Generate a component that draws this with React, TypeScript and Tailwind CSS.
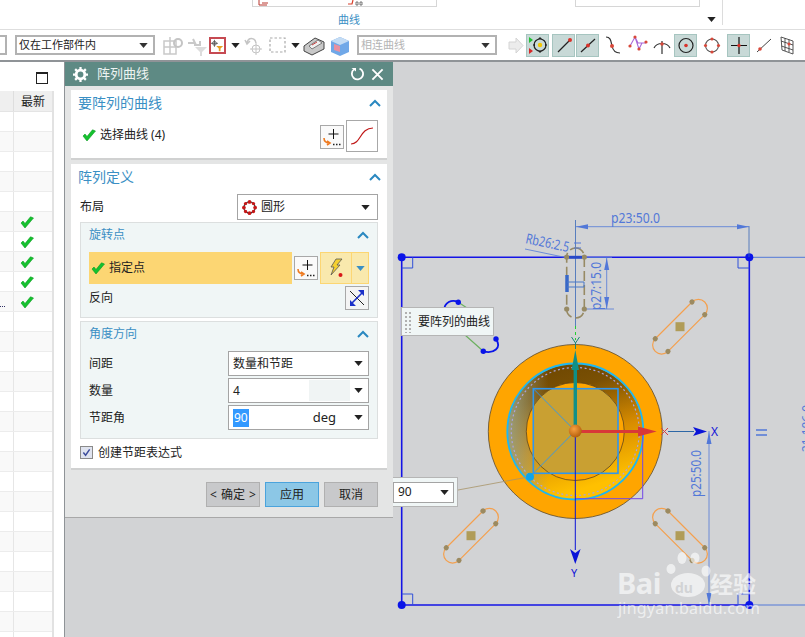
import type { ReactNode } from "react";

const fontCls = "font-['Noto_Sans','Noto_Sans_CJK_SC',sans-serif]";

function Check({ className = "" }: { className?: string }) {
  return (
    <svg viewBox="0 0 14 13" className={`h-[13px] w-[14px] shrink-0 ${className}`} aria-hidden>
      <path d="M1 7 L5 12 L13.5 2 L10.5 0.8 L5 7.5 L3 5 Z" fill="#14c22e" stroke="#0c9a22" strokeWidth="0.6" />
    </svg>
  );
}

function Chevron() {
  return (
    <svg viewBox="0 0 12 8" className="h-[8px] w-[12px] shrink-0" aria-hidden>
      <path d="M1 7 L6 2 L11 7" fill="none" stroke="#2a88c0" strokeWidth="2" />
    </svg>
  );
}

function Caret({ color = "#222" }: { color?: string }) {
  return (
    <svg viewBox="0 0 10 6" className="h-[5px] w-[9px] shrink-0" aria-hidden>
      <path d="M0 0 H10 L5 6 Z" fill={color} />
    </svg>
  );
}

function AddButton() {
  return (
    <div className="h-[24px] w-[24px] shrink-0 border border-[#a8a8a8] bg-[#fafafa]">
      <svg viewBox="0 0 22 22" className="h-full w-full" aria-hidden>
        <path d="M12.5 3 V13 M7.5 8 H17.5" stroke="#111" strokeWidth="1" />
        <path d="M3 12 C3 16 5 17 9 17 M6 15 L9 17 L6 19" fill="none" stroke="#ee7a20" strokeWidth="1.6" />
        <path d="M12 18.5 H13.5 M15 18.5 H16.5 M18 18.5 H19.5" stroke="#222" strokeWidth="1.6" />
      </svg>
    </div>
  );
}

function Dropdown({ children, className = "" }: { children: ReactNode; className?: string }) {
  return (
    <div className={`flex h-[25px] items-center justify-between border border-[#a4a4a4] bg-white pl-[4px] pr-[5px] text-[12px] text-[#222] ${className}`}>
      {children}
      <Caret />
    </div>
  );
}

function PanelHead({ title, className = "" }: { title: string; className?: string }) {
  return (
    <div className={`flex items-center justify-between ${className}`}>
      <span className="text-[#3a8fc4]">{title}</span>
      <Chevron />
    </div>
  );
}

function SelectBox({ children, className = "" }: { children: ReactNode; className?: string }) {
  return (
    <div className={`flex h-[20px] items-center justify-between border-2 border-[#b2b2b2] bg-white pl-[2px] pr-[5px] text-[11px] ${className}`}>
      {children}
      <Caret color="#333" />
    </div>
  );
}

function Tool({ children, className = "", on = false }: { children: ReactNode; className?: string; on?: boolean }) {
  return (
    <div className={`flex h-[23px] shrink-0 items-center justify-center ${on ? "border border-[#a6c5c0] bg-[#c8d9d7]" : ""} ${className}`}>
      <svg viewBox="0 0 24 23" className="h-[23px] w-[24px] shrink-0 overflow-visible" aria-hidden>
        {children}
      </svg>
    </div>
  );
}

function Ribbon() {
  return (
    <div className="flex h-[30px] border-b border-[#dedede] bg-white">
      <div className="ml-[252px] flex h-[29px] w-[448px] flex-col">
        <div className="flex">
          <div className="flex h-[7px] w-[185px] items-start justify-between border-x border-b border-[#d6d6d6] px-[5px]">
            <svg viewBox="0 0 12 6" className="h-[6px] w-[12px]" aria-hidden>
              <path d="M1 0 V5 H9 M4 3 H10" fill="none" stroke="#b8362e" strokeWidth="1" />
            </svg>
            <svg viewBox="0 0 16 6" className="mr-[67px] h-[6px] w-[16px]" aria-hidden>
              <path d="M0 4 H4 L5 0" fill="none" stroke="#d8402c" strokeWidth="1.2" />
              <path d="M8 2 H10 V5 H8 Z M12 2 H14 V5 H12 Z" fill="none" stroke="#555" strokeWidth="0.8" />
            </svg>
          </div>
          <div className="ml-[138px] h-[7px] w-[125px] border-x border-b border-[#d6d6d6]" />
        </div>
        <div className="mt-[5px] pl-[86px] text-[11px] leading-[16px] text-[#3a8fc4]">曲线</div>
      </div>
      <div className="ml-[7px] mt-[17px]">
        <Caret />
      </div>
      <div className="ml-[6px] h-[25px] border-l border-[#dcdcdc]" />
    </div>
  );
}

function Toolbar() {
  return (
    <div className="flex h-[32px] items-center border-b-2 border-[#8f9397] bg-white">
      <div className="h-[20px] w-[7px] shrink-0 border-y-2 border-r-2 border-[#b2b2b2]" />
      <SelectBox className="ml-[8px] w-[140px] text-[#222]">仅在工作部件内</SelectBox>
      <Tool className="ml-[8px] w-[20px]">
        <path d="M3 7 H15 V20 H3 Z M9 3 V20 M3 13 H15" fill="none" stroke="#c9c9c9" strokeWidth="1.5" />
        <circle cx="17" cy="9" r="4" fill="none" stroke="#c4c4c4" strokeWidth="2" />
      </Tool>
      <Tool className="ml-[4px] w-[20px]">
        <path d="M3 9 H10 L8 5 M15 7 V11 H9" fill="none" stroke="#c9c9c9" strokeWidth="2" />
        <path d="M10 13 H22 L17 18 V22 H15 V18 Z" fill="#dcdcdc" />
      </Tool>
      <div className="ml-[2px] flex h-[17px] w-[17px] shrink-0 items-center justify-center border-2 border-[#c64a52] bg-white">
        <svg viewBox="0 0 15 13" className="h-[13px] w-[15px]" aria-hidden>
          <circle cx="4" cy="4" r="2.2" fill="none" stroke="#555" />
          <path d="M4 0 V8 M0 4 H8" stroke="#555" />
          <path d="M6 7 H14 L11 10 V13 H9 V10 Z" fill="#e8a020" />
        </svg>
      </div>
      <div className="ml-[5px]">
        <Caret />
      </div>
      <Tool className="ml-[4px] w-[21px]">
        <path d="M4 9 C5 3 12 3 13 9 M2 6 L4 10 L7 7" fill="none" stroke="#c4c4c4" strokeWidth="1.5" />
        <circle cx="13" cy="15" r="4" fill="none" stroke="#c4c4c4" />
        <path d="M13 9 V21 M7 15 H19" stroke="#c4c4c4" />
      </Tool>
      <Tool className="ml-[3px] w-[19px]">
        <path d="M4 4 H19 V18 H4 Z" fill="none" stroke="#a9a9a9" strokeWidth="1.2" strokeDasharray="2.5 2" />
      </Tool>
      <div className="ml-[4px]">
        <Caret />
      </div>
      <Tool className="ml-[3px] w-[22px]">
        <path d="M2 12 L13 4 L22 8 L22 15 L10 21 L2 17 Z" fill="#c8c8c8" stroke="#444" />
        <path d="M7 12 L16 6 L20 9 L10 15 Z" fill="#f0f0f0" stroke="#555" strokeWidth="0.7" />
        <path d="M10 11 L15 8" stroke="#c84040" />
      </Tool>
      <Tool className="ml-[4px] w-[22px]">
        <path d="M3 7 L12 3 L21 7 V18 L12 22 L3 18 Z" fill="#70a8e8" />
        <path d="M3 7 L12 3 L21 7 L12 11 Z" fill="#c4dcf4" />
        <path d="M6 10 L12 12 V18 L6 16 Z" fill="#e890a0" />
      </Tool>
      <SelectBox className="ml-[6px] w-[140px] text-[#b4b4b4]">相连曲线</SelectBox>
      <Tool className="ml-[11px] w-[18px]">
        <path d="M4 8 H11 V4 L18 11.5 L11 19 V15 H4 Z" fill="#ececec" stroke="#d4d4d4" />
      </Tool>
      <Tool on className="ml-[0px] w-[23px]">
        <path d="M3 3 L7 6 L3 9 Z" fill="#20c030" />
        <path d="M3 14 L7 17 L3 20 Z" fill="#d82828" />
        <circle cx="14" cy="11" r="6" fill="none" stroke="#222" strokeWidth="1.2" />
        <circle cx="14" cy="11" r="2.2" fill="#f4c800" />
        <path d="M14 3 l2 2 h-4 Z M14 19 l2 -2 h-4 Z M7 11 l2 -2 v4 Z M21 11 l-2 -2 v4 Z" fill="#222" />
      </Tool>
      <Tool on className="ml-[3px] w-[23px]">
        <path d="M6 18 L18 6" stroke="#222" strokeWidth="1.2" />
        <circle cx="18" cy="6" r="2" fill="#d8322a" />
      </Tool>
      <Tool on className="ml-[1px] w-[23px]">
        <path d="M5 18 L19 5" stroke="#222" strokeWidth="1.2" />
        <circle cx="12" cy="11.5" r="2" fill="#d8322a" />
      </Tool>
      <Tool className="ml-[6px] w-[18px]">
        <path d="M4 3 C9 3 9 8 10 12 C11 17 13 19 18 19" fill="none" stroke="#333" strokeWidth="1.2" />
        <circle cx="10" cy="12" r="2" fill="#d8483a" />
      </Tool>
      <Tool className="ml-[4px] w-[22px]">
        <path d="M4 12 L9 3 L13 15 L16 9 L20 9 M9 3 L12 9 L16 9" fill="none" stroke="#a868d8" strokeWidth="1.1" />
        <circle cx="4" cy="12" r="1.6" fill="#d8483a" />
        <circle cx="9" cy="3" r="1.6" fill="#d8483a" />
        <circle cx="13" cy="15" r="1.6" fill="#d8483a" />
        <circle cx="20" cy="8" r="1.6" fill="#d8483a" />
      </Tool>
      <Tool className="ml-[2px] w-[22px]">
        <path d="M4 14 C7 8 17 8 20 14 M12 7 V20" fill="none" stroke="#333" strokeWidth="1.2" />
        <circle cx="12" cy="10" r="1.7" fill="#d8483a" />
      </Tool>
      <Tool on className="ml-[1px] w-[23px]">
        <circle cx="12" cy="11.5" r="7" fill="none" stroke="#222" strokeWidth="1.2" />
        <circle cx="12" cy="11.5" r="1.8" fill="#d8322a" />
      </Tool>
      <Tool className="ml-[3px] w-[24px]">
        <circle cx="12" cy="11.5" r="6.5" fill="none" stroke="#555" strokeWidth="1.1" />
        <circle cx="12" cy="5" r="1.6" fill="#d8483a" />
        <circle cx="12" cy="18" r="1.6" fill="#d8483a" />
        <circle cx="5.5" cy="11.5" r="1.6" fill="#d8483a" />
        <circle cx="18.5" cy="11.5" r="1.6" fill="#d8483a" />
      </Tool>
      <Tool on className="ml-[3px] w-[23px]">
        <path d="M12 3 V20 M4 11.5 H20" stroke="#111" strokeWidth="1.2" />
        <circle cx="12" cy="11.5" r="1.7" fill="#d8322a" />
      </Tool>
      <Tool className="ml-[5px] w-[17px]">
        <path d="M5 18 L19 5" stroke="#444" strokeWidth="1" />
        <circle cx="8" cy="15" r="1.8" fill="#d8483a" />
      </Tool>
      <Tool className="ml-[7px] w-[16px]">
        <path d="M6 3 L18 7 V20 L7 16 Z M6 7 L18 11 M6.5 12 L18 16 M10 4 V17 M14 5.5 V18" fill="none" stroke="#444" strokeWidth="0.9" />
        <circle cx="14" cy="10" r="1.5" fill="#d8483a" />
      </Tool>
    </div>
  );
}

function LeftPanel() {
  const rows = Array.from({ length: 27 }, (_, i) => i);
  return (
    <div className="h-full w-[65px] shrink-0 overflow-hidden border-r border-[#8f9397] bg-white">
      <div className="flex h-[29px] items-start pl-[36px] pt-[10px]">
        <div className="h-[12px] w-[12px] border border-t-2 border-[#222]" />
      </div>
      <div className="w-[54px] border-r-2 border-[#e2e2e2]">
        <div className="flex h-[21px] border-b border-[#e4e4e4] bg-[#efefef]">
          <div className="w-[14px] border-r border-[#dedede]" />
          <div className="flex-1 text-center text-[12px] leading-[21px] text-[#222]">最新</div>
        </div>
        {rows.map((i) => (
          <div key={i} className={`flex h-[20px] border-b border-[#ececec] ${i % 2 ? "bg-[#f9f9f9]" : "bg-white"}`}>
            <div className="flex w-[14px] items-end border-r border-[#e6e6e6]">
              {i === 9 && <span className="mb-[4px] h-[1px] w-[5px] border-t border-dotted border-[#336]" />}
            </div>
            <div className="flex flex-1 items-center pl-[6px] pt-[2px]">{i >= 5 && i <= 9 && <Check />}</div>
          </div>
        ))}
      </div>
    </div>
  );
}

function Dialog() {
  return (
    <div className="absolute left-0 top-0 flex h-[456px] w-[328px] flex-col border-b border-[#a8a8a8] bg-[#e4e5e5] text-[12px] text-[#222]">
      <div className="flex h-[24px] shrink-0 items-center bg-[#5e8a84] pl-[8px] pr-[9px] text-[13px] text-[#eef4f2]">
        <svg viewBox="0 0 16 16" className="h-[15px] w-[15px]" aria-hidden>
          <circle cx="8" cy="8" r="4.6" fill="none" stroke="#fff" strokeWidth="3" />
          <path d="M8 0 V3 M8 13 V16 M0 8 H3 M13 8 H16 M2.3 2.3 L4.4 4.4 M11.6 11.6 L13.7 13.7 M2.3 13.7 L4.4 11.6 M11.6 4.4 L13.7 2.3" stroke="#fff" strokeWidth="2.4" />
        </svg>
        <span className="ml-[9px] flex-1">阵列曲线</span>
        <svg viewBox="0 0 14 14" className="h-[14px] w-[14px]" aria-hidden>
          <path d="M4 2.4 A5.6 5.6 0 1 0 9.5 1.6" fill="none" stroke="#fff" strokeWidth="1.8" />
          <path d="M1.5 1 H6 V4.5 Z" fill="#fff" />
        </svg>
        <svg viewBox="0 0 14 14" className="ml-[7px] h-[13px] w-[13px]" aria-hidden>
          <path d="M1.5 1.5 L12.5 12.5 M12.5 1.5 L1.5 12.5" stroke="#fff" strokeWidth="2" />
        </svg>
      </div>

      <div className="mx-[6px] mt-[4px] h-[70px] border-b-2 border-[#d0d1d1] bg-white">
        <PanelHead title="要阵列的曲线" className="h-[25px] pl-[7px] pr-[6px] text-[14px]" />
        <div className="mt-[5px] flex items-start pl-[11px] pr-[9px]">
          <div className="mt-[6px] flex flex-1 items-center gap-[4px]">
            <Check />
            <span>选择曲线 (4)</span>
          </div>
          <div className="mt-[5px]">
            <AddButton />
          </div>
          <div className="ml-[2px] h-[32px] w-[32px] border border-[#a8a8a8] bg-white">
            <svg viewBox="0 0 30 30" className="h-full w-full" aria-hidden>
              <path d="M4 23 C14 23 13 7 26 7" fill="none" stroke="#c01818" strokeWidth="1.2" />
            </svg>
          </div>
        </div>
      </div>

      <div className="mx-[6px] mt-[4px] h-[306px] border-b-2 border-[#d0d1d1] bg-white">
        <PanelHead title="阵列定义" className="h-[25px] pl-[7px] pr-[6px] text-[14px]" />
        <div className="mt-[5px] flex h-[26px] items-center justify-between pl-[9px] pr-[9px]">
          <span>布局</span>
          <div className="flex h-[26px] w-[141px] items-center justify-between border border-[#a4a4a4] bg-white pl-[4px] pr-[7px]">
            <span className="flex items-center gap-[4px] text-[12px]">
              <svg viewBox="0 0 16 16" className="h-[15px] w-[15px]" aria-hidden>
                <circle cx="8" cy="8" r="6" fill="none" stroke="#333" strokeWidth="1.2" />
                <g fill="#c81818">
                  <circle cx="8" cy="2" r="2" />
                  <circle cx="8" cy="14" r="2" />
                  <circle cx="2" cy="8" r="2" />
                  <circle cx="14" cy="8" r="2" />
                  <circle cx="3.8" cy="3.8" r="1.8" />
                  <circle cx="12.2" cy="3.8" r="1.8" />
                  <circle cx="3.8" cy="12.2" r="1.8" />
                  <circle cx="12.2" cy="12.2" r="1.8" />
                </g>
              </svg>
              圆形
            </span>
            <Caret />
          </div>
        </div>

        <div className="mx-[9px] mt-[2px] h-[96px] border border-[#dcdfdf] bg-[#f0f6f6] px-[8px]">
          <PanelHead title="旋转点" className="h-[23px] pr-[0px]" />
          <div className="mt-[6px] flex h-[32px] items-center">
            <div className="flex h-[32px] w-[203px] items-center gap-[4px] bg-[#fcd673] pl-[2px]">
              <Check />
              <span>指定点</span>
            </div>
            <div className="ml-[2px]">
              <AddButton />
            </div>
            <div className="ml-[2px] flex h-[32px] w-[49px] border border-[#fcd673] bg-[#f9e9ad]">
              <div className="flex w-[31px] items-center justify-center border-r border-[#fcd673]">
                <svg viewBox="0 0 18 22" className="h-[22px] w-[18px]" aria-hidden>
                  <path d="M9 2 L15 2 L10 8 L13 8 L4 18 L7 10 L4 10 Z" fill="#f4d030" stroke="#555" strokeWidth="0.8" />
                  <circle cx="13.5" cy="18" r="2" fill="#d81818" />
                </svg>
              </div>
              <div className="flex flex-1 items-center justify-center">
                <Caret color="#3a8fc4" />
              </div>
            </div>
          </div>
          <div className="mt-[2px] flex h-[24px] items-center justify-between">
            <span>反向</span>
            <div className="h-[24px] w-[24px] border border-[#a8a8a8] bg-[#f4f4f4]">
              <svg viewBox="0 0 22 22" className="h-full w-full" aria-hidden>
                <path d="M4 4 L18 18" stroke="#222" strokeWidth="1" />
                <path d="M5 17 L17 5" stroke="#1c30c8" strokeWidth="1.6" />
                <path d="M18 3 V9 L12 3 Z M4 19 V13 L10 19 Z" fill="#1c30c8" />
              </svg>
            </div>
          </div>
        </div>

        <div className="mx-[9px] mt-[3px] h-[118px] border border-[#dcdfdf] bg-[#f0f6f6] px-[8px]">
          <PanelHead title="角度方向" className="h-[23px]" />
          <div className="mt-[6px] flex flex-col gap-[2px]">
            <div className="flex items-center justify-between">
              <span>间距</span>
              <Dropdown className="w-[141px]">数量和节距</Dropdown>
            </div>
            <div className="flex items-center justify-between">
              <span>数量</span>
              <Dropdown className="w-[141px]">
                <span className="flex h-[21px] flex-1 items-center">
                  <span className="w-[76px]">4</span>
                  <span className="h-[21px] w-[41px] bg-[#f0f4f4]" />
                </span>
              </Dropdown>
            </div>
            <div className="flex items-center justify-between">
              <span>节距角</span>
              <Dropdown className="w-[141px]">
                <span className="flex flex-1 items-center">
                  <span className="bg-[#3399ff] px-[1px] text-white">90</span>
                  <span className="ml-[64px] text-[13px]">deg</span>
                </span>
              </Dropdown>
            </div>
          </div>
        </div>

        <div className="ml-[9px] mt-[7px] flex h-[13px] items-center gap-[5px]">
          <div className="flex h-[13px] w-[13px] items-center justify-center border border-[#8a8a8a] bg-[#dfe3ef]">
            <svg viewBox="0 0 10 10" className="h-[9px] w-[9px]" aria-hidden>
              <path d="M1.5 5 L4 8 L8.5 1.5" fill="none" stroke="#3c4c9c" strokeWidth="1.6" />
            </svg>
          </div>
          <span>创建节距表达式</span>
        </div>
      </div>

      <div className="mr-[15px] mt-[12px] flex justify-end gap-[5px] text-[12px]">
        <div className="flex h-[25px] w-[54px] items-center justify-center gap-[4px] border border-[#b0b0b0] bg-[#c8c9cb]">
          <span>&lt;</span>确定<span>&gt;</span>
        </div>
        <div className="flex h-[25px] w-[54px] items-center justify-center border border-[#4aa3dc] bg-[#8cc7e6]">应用</div>
        <div className="flex h-[25px] w-[54px] items-center justify-center border border-[#b0b0b0] bg-[#c8c9cb]">取消</div>
      </div>
    </div>
  );
}

function Slot({ cx, cy, flip = false }: { cx: number; cy: number; flip?: boolean }) {
  return (
    <g transform={`translate(${cx} ${cy}) rotate(${flip ? 45 : -45})`}>
      <rect x="-35" y="-9" width="70" height="18" rx="9" fill="none" stroke="#f4a04e" strokeWidth="1.2" />
      <circle cx="-26" cy="-9" r="2.6" fill="#9c8a60" />
      <circle cx="-26" cy="9" r="2.6" fill="#9c8a60" />
      <circle cx="26" cy="-9" r="2.6" fill="#9c8a60" />
      <circle cx="26" cy="9" r="2.6" fill="#9c8a60" />
      <rect x="-4.5" y="-4.5" width="9" height="9" transform={`rotate(${flip ? -45 : 45})`} fill="#b09c58" />
    </g>
  );
}

function CadCanvas() {
  const dim = "#5278d8";
  return (
    <svg viewBox="65 62 740 575" className="absolute inset-0 h-full w-full" aria-hidden>
      <defs>
        <linearGradient id="ring" x1="0" y1="0" x2="0.3" y2="1">
          <stop offset="0" stopColor="#6a4400" />
          <stop offset="0.3" stopColor="#7a5004" />
          <stop offset="0.65" stopColor="#d88c00" />
          <stop offset="1" stopColor="#ffc000" />
        </linearGradient>
        <linearGradient id="ringLeft" x1="0" y1="0" x2="1" y2="0">
          <stop offset="0" stopColor="#9aa080" stopOpacity="0.95" />
          <stop offset="0.3" stopColor="#9aa080" stopOpacity="0" />
        </linearGradient>
        <radialGradient id="ball" cx="0.4" cy="0.35" r="0.7">
          <stop offset="0" stopColor="#f8a040" />
          <stop offset="1" stopColor="#b05a08" />
        </radialGradient>
        <clipPath id="hole">
          <circle cx="575.3" cy="431.5" r="49" />
        </clipPath>
      </defs>

      {/* outline */}
      <path d="M401.7 257.3 H749.3 V605 H401.7 Z" fill="none" stroke="#1414e6" strokeWidth="1.6" />
      <path d="M749 257.3 H805 M749 605 H805" stroke={dim} strokeWidth="1" />
      <path d="M401.7 268 H412.7 V257.3 M749.3 268 H738 V257.3 M401.7 594 H412.7 V605 M749.3 594 H738 V605" fill="none" stroke="#3050d8" strokeWidth="1" />
      <circle cx="401.7" cy="257.3" r="4" fill="#0a14e8" />
      <circle cx="749.3" cy="257.3" r="4" fill="#0a14e8" />
      <circle cx="401.7" cy="605" r="4" fill="#0a14e8" />
      <circle cx="749.3" cy="605" r="4" fill="#0a14e8" />

      {/* dimensions */}
      <path d="M575.5 220 V326 M749 226 V257" stroke="#3868b8" strokeWidth="0.8" />
      <path d="M576 226.7 H749" stroke={dim} strokeWidth="0.8" />
      <path d="M576 226.7 l12 -2.5 v5 Z M749 226.7 l-12 -2.5 v5 Z" fill={dim} />
      <text x="611" y="223" fontSize="14" fill={dim} textLength="49" lengthAdjust="spacingAndGlyphs">p23:50.0</text>
      <text transform="translate(525 243) rotate(12)" fontSize="14" fill={dim} textLength="44" lengthAdjust="spacingAndGlyphs">Rb26:2.5</text>
      <path d="M525 249 L568 258" stroke={dim} strokeWidth="0.8" />
      <path d="M606.7 257.5 V309 M586 309 H614 M586 257.5 H612" stroke={dim} strokeWidth="0.8" />
      <path d="M606.7 258 l-2.5 12 h5 Z M606.7 309 l-2.5 -12 h5 Z" fill={dim} />
      <text transform="translate(601 310) rotate(-90)" fontSize="14" fill={dim} textLength="48" lengthAdjust="spacingAndGlyphs">p27:15.0</text>
      <path d="M709 431 V605" stroke={dim} strokeWidth="0.8" />
      <path d="M709 432 l-2.5 12 h5 Z M709 605 l-2.5 -12 h5 Z" fill={dim} />
      <text transform="translate(701 497) rotate(-90)" fontSize="14" fill={dim} textLength="47" lengthAdjust="spacingAndGlyphs">p25:50.0</text>
      <path d="M756 430 H767 M756 435 H767" stroke={dim} strokeWidth="1.4" />
      <text transform="translate(811 452) rotate(-90)" fontSize="12" fill={dim} textLength="47" lengthAdjust="spacingAndGlyphs">31.186.0</text>

      {/* slots */}
      <Slot cx={680} cy={326.7} flip={false} />
      <Slot cx={471} cy={535.7} flip={false} />
      <Slot cx={680} cy={535.7} flip />
      <rect x="566.7" y="248" width="17.6" height="70" rx="8.8" fill="none" stroke="#978a64" strokeWidth="1.6" strokeDasharray="10 4" />
      <circle cx="566.7" cy="257" r="2.6" fill="#978a64" />
      <circle cx="584.3" cy="257" r="2.6" fill="#978a64" />
      <circle cx="566.7" cy="309" r="2.6" fill="#978a64" />
      <circle cx="584.3" cy="309" r="2.6" fill="#978a64" />
      <path d="M569 257.3 H582" stroke="#2848c8" strokeWidth="3" />
      <path d="M567 275 V292" stroke="#3868c8" strokeWidth="3.5" />
      <path d="M567 282 H584 V287 H567" fill="none" stroke="#4878c8" strokeWidth="1" />
      <path d="M574 243 H581 M574 248 H581" stroke={dim} strokeWidth="1.2" />

      {/* selected curve */}
      <path d="M444 311 C444 302 452 299 458 302" fill="none" stroke="#0a14e8" strokeWidth="1.8" />
      <path d="M496 339 C502 348 494 354 483.3 351.3" fill="none" stroke="#0a14e8" strokeWidth="1.8" />
      <path d="M458 302 L470 310 M465 335 L483.3 351.3" stroke="#6cb060" strokeWidth="1.2" />
      <circle cx="458.3" cy="302.3" r="2.7" fill="#0a14e8" />
      <circle cx="496" cy="339" r="2.7" fill="#0a14e8" />
      <circle cx="483.3" cy="351.3" r="2.7" fill="#0a14e8" />

      {/* body */}
      <circle cx="575.3" cy="431.5" r="87" fill="#ffa500" stroke="#5a4a30" strokeWidth="0.8" />
      <circle cx="575.3" cy="431.5" r="67.5" fill="url(#ring)" />
      <circle cx="575.3" cy="431.5" r="67.5" fill="url(#ringLeft)" />
      <circle cx="575.3" cy="431.5" r="49" fill="#ffa500" />
      <rect x="533.3" y="388.7" width="84.7" height="84.6" fill="#c9a032" clipPath="url(#hole)" />
      <circle cx="575.3" cy="431.5" r="49" fill="none" stroke="#4a3a20" strokeWidth="0.7" />
      <circle cx="575.3" cy="431.5" r="64" fill="none" stroke="#a8a4e0" strokeWidth="1.2" strokeDasharray="2 2.5" />
      <circle cx="575.3" cy="431.5" r="68" fill="none" stroke="#1cb8f4" strokeWidth="1.8" />
      <path d="M575.5 498.7 H642.7 V431" fill="none" stroke="#7048e8" strokeWidth="1" />
      <rect x="533.3" y="388.7" width="84.7" height="84.6" fill="none" stroke="#2f96ee" strokeWidth="1.6" />
      <path d="M533.3 388.7 L575.3 431 L530 476.7" fill="none" stroke="#2f96ee" strokeWidth="0.9" />
      <path d="M458 490 L530 476.7" stroke="#a89468" strokeWidth="0.8" />
      <circle cx="530" cy="476.7" r="4" fill="#0ea4ea" />

      {/* triad */}
      <path d="M575.5 326 V340" stroke="#20d030" strokeWidth="1" strokeDasharray="3 3" />
      <path d="M571.5 337 L575.5 343 L579.5 337 M575.5 343 V349" fill="none" stroke="#208878" strokeWidth="1" />
      <path d="M575.3 431 V368" stroke="#109088" strokeWidth="3.4" />
      <path d="M575.3 350 L579 370 H571.6 Z" fill="#109088" />
      <path d="M575.3 431 V550" stroke="#0a14d8" strokeWidth="1" />
      <path d="M575.3 564 L570 549 L575.3 553 L580.6 549 Z" fill="#0a14d8" />
      <text x="571" y="577" fontSize="11" fill="#1414d8">Y</text>
      <path d="M580 431.5 H645" stroke="#d83838" strokeWidth="3.2" />
      <path d="M656.7 431.5 L638 426.5 V436.5 Z" fill="#d83838" />
      <path d="M661 428 L668 435 M668 428 L661 435" stroke="#d84040" strokeWidth="1" />
      <path d="M668 431.5 H694" stroke="#1a5aa0" strokeWidth="0.9" />
      <path d="M707 431.5 L693 427 L696 431.5 L693 436 Z" fill="#0a14d8" />
      <text x="711" y="436" fontSize="12" fill="#1414d8">X</text>
      <circle cx="575.3" cy="431" r="6.5" fill="url(#ball)" />

      {/* watermark */}
      <g fill="#fff" opacity="0.62">
        <text x="617" y="594" fontSize="29" fontWeight="700" letterSpacing="-0.5">Bai</text>
        <ellipse cx="688" cy="585" rx="17" ry="12" />
        <ellipse cx="671" cy="569" rx="4.5" ry="5" />
        <ellipse cx="682" cy="558" rx="4.5" ry="6" />
        <ellipse cx="695" cy="558" rx="4.5" ry="5.5" />
        <ellipse cx="706" cy="571" rx="4.5" ry="5.5" />
        <text x="710" y="593" fontSize="23" fontWeight="700">经验</text>
        <text x="618" y="614" fontSize="16" textLength="142">jingyan.baidu.com</text>
      </g>
      <text x="675" y="593" fontSize="14" fontWeight="700" fill="#d2d3d5">du</text>
    </svg>
  );
}

export default function App() {
  return (
    <div className={`h-[637px] w-[805px] overflow-hidden bg-white ${fontCls}`}>
      <Ribbon />
      <Toolbar />
      <div className="flex h-[575px]">
        <LeftPanel />
        <div className="relative flex-1 bg-[#d2d3d5]">
          <CadCanvas />
          <div className="absolute left-[336px] top-[245px] flex h-[29px] w-[93px] items-center border border-[#b5b5b5] bg-[#f0f6f6] text-[12px] text-[#222]">
            <span className="ml-[2px] h-[22px] w-[8px] bg-[radial-gradient(#b0b0b0_1px,transparent_1px)] bg-[length:4px_4px]" />
            <span className="ml-[6px]">要阵列的曲线</span>
          </div>
          <div className="absolute left-[328px] top-[415px] flex h-[30px] w-[65px] items-center border-y border-r border-[#b5b5b5] bg-[#f0f6f6] pr-[3px]">
            <div className="flex h-[21px] flex-1 items-center justify-between border border-[#a4a4a4] bg-white pl-[4px] pr-[4px] text-[12px] text-[#222]">
              90
              <Caret />
            </div>
          </div>
          <Dialog />
        </div>
      </div>
    </div>
  );
}
